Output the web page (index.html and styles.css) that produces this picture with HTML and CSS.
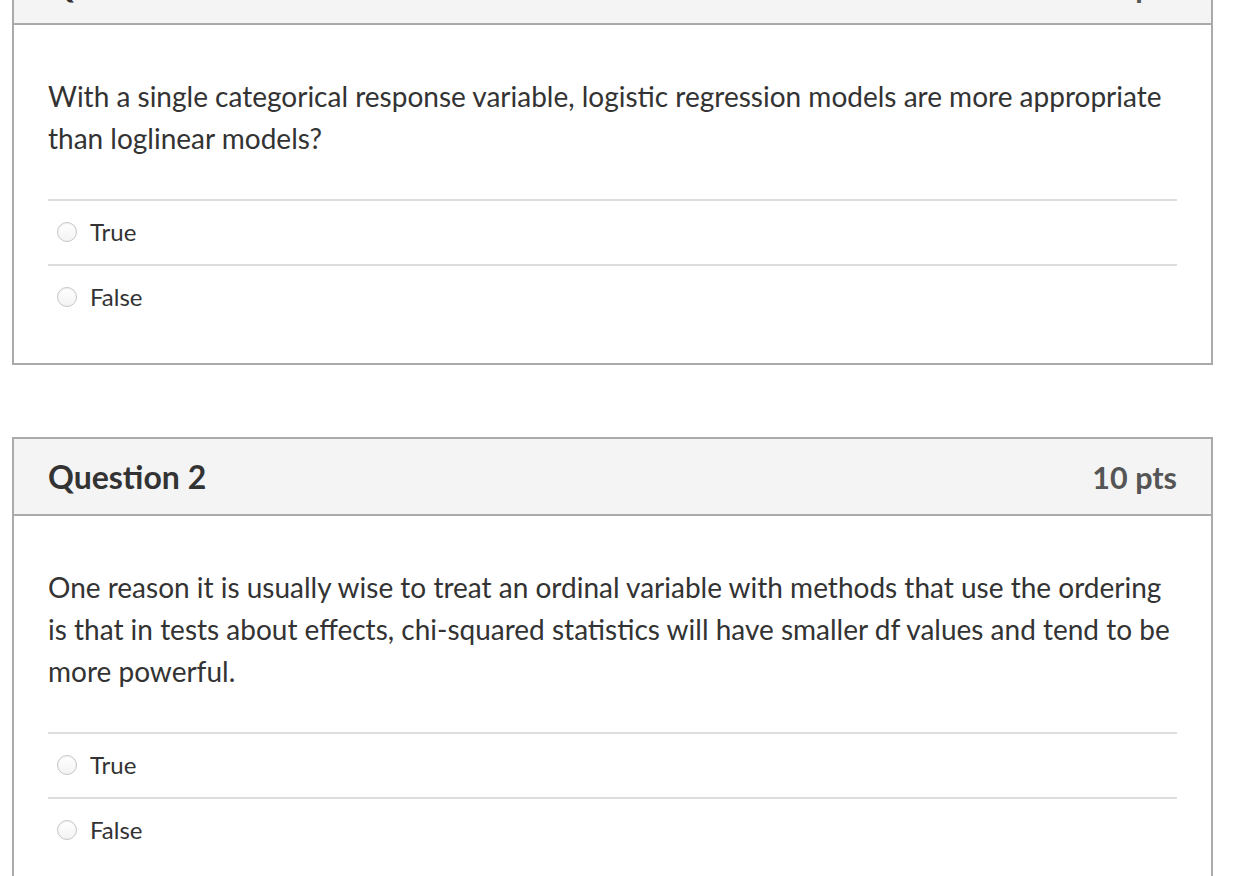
FILE: index.html
```html
<!DOCTYPE html>
<html lang="en">
<head>
<meta charset="utf-8">
<title>Quiz</title>
<link rel="stylesheet" href="styles.css">
</head>
<body>
<div class="page">
  <div class="card">
    <div class="card-header">
      <span class="q-title">Question 1</span>
      <span class="q-pts">10 pts</span>
    </div>
    <div class="card-body">
      <p class="q-text">With a single categorical response variable, logistic regression models are more appropriate than loglinear models?</p>
      <div class="answers">
        <div class="answer"><span class="radio"></span><span class="label">True</span></div>
        <div class="answer"><span class="radio"></span><span class="label">False</span></div>
      </div>
    </div>
  </div>
  <div class="card">
    <div class="card-header">
      <span class="q-title">Question 2</span>
      <span class="q-pts">10 pts</span>
    </div>
    <div class="card-body">
      <p class="q-text">One reason it is usually wise to treat an ordinal variable with methods that use the ordering is that in tests about effects, chi-squared statistics will have smaller df values and tend to be more powerful.</p>
      <div class="answers">
        <div class="answer"><span class="radio"></span><span class="label">True</span></div>
        <div class="answer"><span class="radio"></span><span class="label">False</span></div>
      </div>
    </div>
  </div>
</div>
</body>
</html>
```

FILE: styles.css
```css
html, body {
  margin: 0;
  padding: 0;
  background: #ffffff;
  overflow: hidden;
}
body {
  font-family: Lato, "Open Sans", "Liberation Sans", sans-serif;
  color: #333333;
}
.page {
  margin-top: -54px;
  padding: 0 25px 0 12px;
  display: flex;
  flex-direction: column;
  gap: 72px;
}
.card {
  border: 2px solid #aaaaaa;
  background: #ffffff;
}
.card-header {
  height: 75px;
  background: #f4f4f4;
  border-bottom: 2px solid #aaaaaa;
  display: flex;
  align-items: center;
  justify-content: space-between;
  padding: 0 34px;
}
.q-title {
  font-size: 32px;
  font-weight: 700;
  color: #333333;
}
.q-pts {
  font-size: 30.5px;
  font-weight: 700;
  color: #555555;
}
.card-body {
  padding: 50px 34px 34px;
}
.q-text {
  margin: 0 0 40px;
  font-size: 28px;
  line-height: 42px;
}
.answer {
  border-top: 2px solid #dddddd;
  height: 63px;
  display: flex;
  align-items: center;
  padding-left: 9px;
}
.radio {
  width: 18px;
  height: 18px;
  border: 1px solid #c6c6c6;
  border-radius: 50%;
  background: linear-gradient(#ffffff, #f3f3f3);
  box-shadow: inset 0 1px 1px rgba(0,0,0,0.06);
  margin-right: 13px;
  flex: none;
  position: relative;
  top: -1px;
}
.label {
  font-size: 24px;
  color: #333333;
  position: relative;
  top: -1px;
}
```
